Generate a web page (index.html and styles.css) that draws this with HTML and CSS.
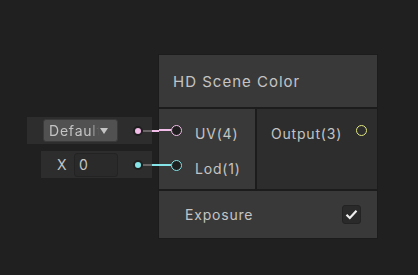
FILE: index.html
```html
<!DOCTYPE html>
<html lang="en">

<head>
    <meta charset="UTF-8">
    <title>HD Scene Color</title>
    <link rel="stylesheet" href="styles.css">
</head>

<body>
    <div class="canvas">
        <div class="fields">
            <div class="field-row">
                <div class="field-panel pink">
                    <div class="dropdown">
                        <span class="dropdown-text">Default</span>
                        <span class="arrow"></span>
                    </div>
                    <span class="dot"></span>
                    <span class="stub"></span>
                </div>
                <span class="wire pink"></span>
            </div>
            <div class="field-row">
                <div class="field-panel cyan">
                    <span class="axis">X</span>
                    <div class="number">0</div>
                    <span class="dot"></span>
                    <span class="stub"></span>
                </div>
                <span class="wire cyan"></span>
            </div>
        </div>

        <div class="node">
            <div class="title">HD Scene Color</div>
            <div class="slots">
                <div class="inputs">
                    <div class="slot pink">
                        <span class="wire-in"></span>
                        <span class="port"></span>
                        <span class="label">UV(4)</span>
                    </div>
                    <div class="slot cyan">
                        <span class="wire-in"></span>
                        <span class="port"></span>
                        <span class="label">Lod(1)</span>
                    </div>
                </div>
                <div class="outputs">
                    <div class="slot yellow">
                        <span class="label">Output(3)</span>
                        <span class="port"></span>
                    </div>
                </div>
            </div>
            <div class="settings">
                <span class="label">Exposure</span>
                <span class="checkbox">
                    <svg width="13" height="11" viewBox="0 0 13 11">
                        <path d="M1.5 5.8 L4.8 9 L11.5 1.8" fill="none" stroke="#eeeeee" stroke-width="2.2" />
                    </svg>
                </span>
            </div>
        </div>
    </div>
</body>

</html>
```

FILE: styles.css
```css
body {
    margin: 0;
    background-color: #202020;
    font-family: Inter, "Noto Sans", sans-serif;
    font-size: 14px;
    letter-spacing: 0.8px;
    color: #c4c4c4;
}

.canvas {
    display: flex;
    align-items: flex-start;
    padding-top: 54px;
}

.fields {
    width: 158px;
    padding-top: 63px;
    display: flex;
    flex-direction: column;
    align-items: flex-end;
    gap: 7px;
}

.field-row {
    display: flex;
    align-items: center;
    position: relative;
    z-index: 1;
    margin-right: -1px;
}

.field-panel {
    height: 27px;
    background-color: #2d2d2d;
    display: flex;
    align-items: center;
    padding-left: 16px;
}

.pink {
    --slot: #f2bde8;
}

.cyan {
    --slot: #84e4e7;
}

.yellow {
    --slot: #e2e880;
}

.dropdown {
    width: 75px;
    height: 23px;
    box-sizing: border-box;
    background-color: #515151;
    border: 1px solid #3a3a3a;
    border-radius: 3px;
    display: flex;
    align-items: center;
    padding-left: 5px;
}

.dropdown-text {
    width: 50px;
    overflow: hidden;
    white-space: nowrap;
    -webkit-mask-image: linear-gradient(to right, black 82%, transparent);
    mask-image: linear-gradient(to right, black 82%, transparent);
}

.arrow {
    width: 0;
    height: 0;
    border-left: 4.5px solid transparent;
    border-right: 4.5px solid transparent;
    border-top: 6px solid #c4c4c4;
    margin-left: 1px;
}

.axis {
    width: 17px;
}

.number {
    width: 44px;
    height: 24px;
    box-sizing: border-box;
    background-color: #2a2a2a;
    border: 1px solid #232323;
    border-radius: 3px;
    padding-left: 4px;
    line-height: 22px;
}

.dot {
    width: 10px;
    height: 10px;
    box-sizing: border-box;
    border-radius: 50%;
    background-color: var(--slot);
    border: 2.5px solid #1f1f1f;
    margin-left: 15px;
}

.stub {
    width: 9px;
    height: 2px;
    background-color: #6a6668;
}

.wire {
    width: 7px;
    height: 2px;
    background-color: var(--slot);
}

.node {
    width: 218px;
    padding: 1px;
    background-color: #1c1c1c;
    display: flex;
    flex-direction: column;
    gap: 2px;
}

.title {
    height: 52px;
    background-color: #393939;
    display: flex;
    align-items: center;
    padding-left: 14px;
    font-size: 15px;
    letter-spacing: 1px;
}

.slots {
    height: 80px;
    display: flex;
    gap: 2px;
}

.inputs {
    width: 96px;
    background-color: #393939;
    padding-top: 9px;
    display: flex;
    flex-direction: column;
    gap: 11px;
}

.outputs {
    flex: 1;
    background-color: #2d2d2d;
    padding-top: 9px;
}

.slot {
    height: 24px;
    display: flex;
    align-items: center;
}

.slot .label {
    padding-top: 7px;
}

.wire-in {
    width: 12px;
    height: 2px;
    background-color: var(--slot);
}

.port {
    width: 11px;
    height: 11px;
    box-sizing: border-box;
    border-radius: 50%;
    border: 1.5px solid var(--slot);
    background-color: #1e1e1e;
}

.inputs .port {
    margin-right: 13px;
}

.outputs .slot {
    padding-left: 14px;
    padding-right: 10px;
    justify-content: space-between;
}

.outputs .port {
    background-color: transparent;
}

.settings {
    height: 47px;
    background-color: #393939;
    display: flex;
    align-items: center;
    justify-content: space-between;
    padding-left: 26px;
    padding-right: 16px;
}

.checkbox {
    width: 19px;
    height: 19px;
    box-sizing: border-box;
    background-color: #2a2a2a;
    border: 1px solid #232323;
    border-radius: 3px;
    display: flex;
    align-items: center;
    justify-content: center;
}
```
